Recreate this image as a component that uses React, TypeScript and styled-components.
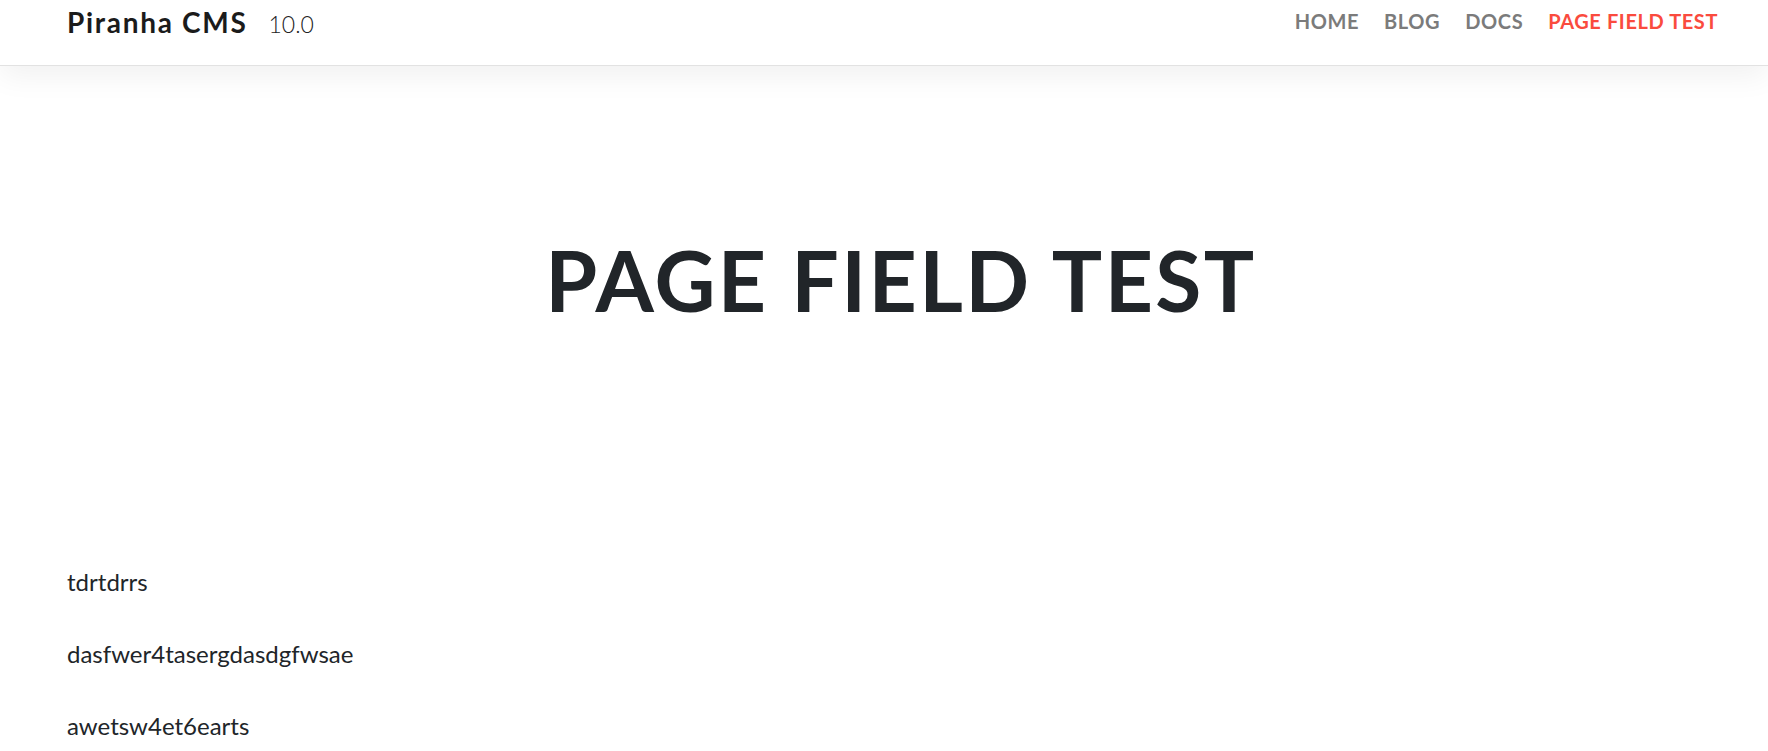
import styled, { createGlobalStyle } from "styled-components";

const GlobalStyle = createGlobalStyle`
  html, body {
    margin: 0;
    padding: 0;
    background: #fff;
  }
  body {
    font-family: "Lato", "Liberation Sans", sans-serif;
    color: #212529;
  }
  * {
    box-sizing: border-box;
  }
`;

const Header = styled.header`
  display: flex;
  justify-content: space-between;
  align-items: flex-start;
  height: 66px;
  padding: 0 50px 0 67px;
  background: #fff;
  border-bottom: 1px solid #e2e2e2;
  box-shadow: 0 10px 30px rgba(0, 0, 0, 0.06);
  position: relative;
  z-index: 2;
`;

const Brand = styled.a`
  display: flex;
  align-items: baseline;
  gap: 21px;
  margin-top: 8px;
  text-decoration: none;
  color: #1b1b1b;
`;

const BrandName = styled.span`
  font-size: 28px;
  font-weight: 700;
  line-height: 1;
  letter-spacing: 1.7px;
`;

const Version = styled.span`
  font-size: 23px;
  font-weight: 300;
  line-height: 1;
  color: #222;
`;

const Nav = styled.nav`
  display: flex;
  gap: 25px;
  margin-top: 11px;
`;

const NavLink = styled.a<{ $active?: boolean }>`
  font-size: 20px;
  font-weight: 700;
  line-height: 1;
  letter-spacing: 0.6px;
  text-transform: uppercase;
  text-decoration: none;
  color: ${(p) => (p.$active ? "#fa4b3e" : "#7b7b7b")};
`;

const Hero = styled.section`
  padding: 164px 50px 0 84px;
  text-align: center;
`;

const Title = styled.h1`
  margin: 0;
  font-size: 84px;
  font-weight: 700;
  line-height: 1.2;
  letter-spacing: 2.4px;
  color: #212529;
`;

const Content = styled.main`
  padding: 233px 67px 0;
`;

const Paragraph = styled.p`
  margin: 0 0 36px;
  font-size: 24px;
  line-height: 1.5;
  color: #212529;
`;

const links = ["Home", "Blog", "Docs", "Page Field Test"];

export default function App() {
  return (
    <>
      <GlobalStyle />
      <Header>
        <Brand href="#">
          <BrandName>Piranha CMS</BrandName>
          <Version>10.0</Version>
        </Brand>
        <Nav>
          {links.map((l, i) => (
            <NavLink key={l} href="#" $active={i === links.length - 1}>
              {l}
            </NavLink>
          ))}
        </Nav>
      </Header>
      <Hero>
        <Title>PAGE FIELD TEST</Title>
      </Hero>
      <Content>
        <Paragraph>tdrtdrrs</Paragraph>
        <Paragraph>dasfwer4tasergdasdgfwsae</Paragraph>
        <Paragraph>awetsw4et6earts</Paragraph>
      </Content>
    </>
  );
}
